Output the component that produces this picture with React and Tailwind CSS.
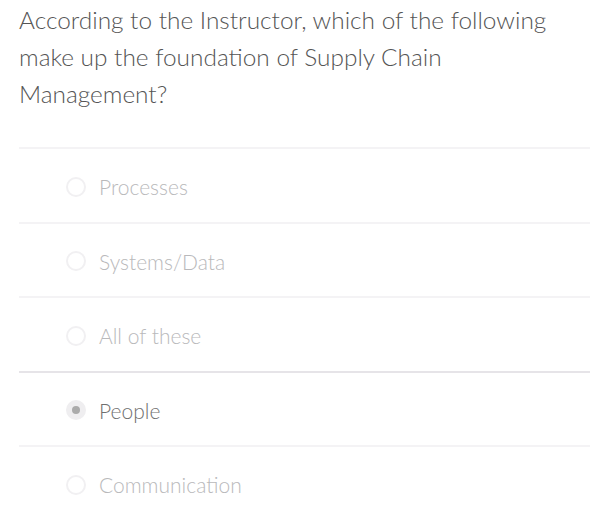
import React from "react";

const options = [
  { label: "Processes", selected: false },
  { label: "Systems/Data", selected: false },
  { label: "All of these", selected: false },
  { label: "People", selected: true },
  { label: "Communication", selected: false },
];

export default function App() {
  return (
    <div className="w-[612px] h-[526px] bg-white overflow-hidden" style={{ fontFamily: "Lato, 'Open Sans', sans-serif" }}>
      <div className="pl-[19px] pr-[22px] pt-[1px]">
        <p className="text-[24.4px] leading-[37px] font-light text-[#555555] w-[550px]">
          According to the Instructor, which of the following make up the foundation of Supply Chain Management?
        </p>
        <div className="mt-[35px]">
          {options.map((o) => (
            <div
              key={o.label}
              className={`h-[74.5px] border-t-2 flex items-center pl-[47px] pt-[3px] ${
                o.selected ? "border-[#e6e4e8]" : "border-[#f4f3f5]"
              }`}
            >
              {o.selected ? (
                <span className="w-[20px] h-[20px] rounded-full bg-[#efeef0] flex items-center justify-center">
                  <span className="w-[8px] h-[8px] rounded-full bg-[#ababab]" />
                </span>
              ) : (
                <span className="w-[20px] h-[20px] rounded-full border-2 border-[#f1f0f2] bg-white" />
              )}
              <span
                className={`ml-[13px] text-[21px] font-light ${
                  o.selected ? "text-[#6f6f6f]" : "text-[#b9b9bb]"
                }`}
              >
                {o.label}
              </span>
            </div>
          ))}
        </div>
      </div>
    </div>
  );
}
